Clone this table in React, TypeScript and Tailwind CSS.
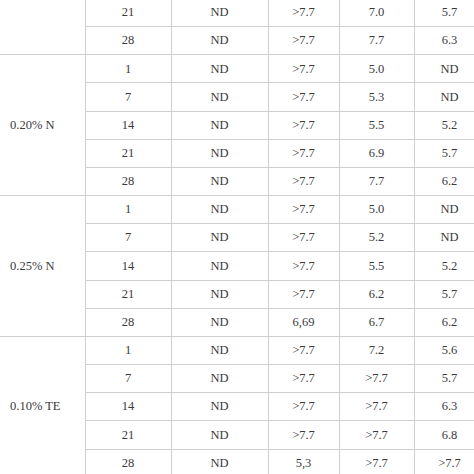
type Row = [string, string, string, string, string];

const groups: { label: string; rows: Row[] }[] = [
  {
    label: "",
    rows: [
      ["21", "ND", ">7.7", "7.0", "5.7"],
      ["28", "ND", ">7.7", "7.7", "6.3"],
    ],
  },
  {
    label: "0.20% N",
    rows: [
      ["1", "ND", ">7.7", "5.0", "ND"],
      ["7", "ND", ">7.7", "5.3", "ND"],
      ["14", "ND", ">7.7", "5.5", "5.2"],
      ["21", "ND", ">7.7", "6.9", "5.7"],
      ["28", "ND", ">7.7", "7.7", "6.2"],
    ],
  },
  {
    label: "0.25% N",
    rows: [
      ["1", "ND", ">7.7", "5.0", "ND"],
      ["7", "ND", ">7.7", "5.2", "ND"],
      ["14", "ND", ">7.7", "5.5", "5.2"],
      ["21", "ND", ">7.7", "6.2", "5.7"],
      ["28", "ND", "6,69", "6.7", "6.2"],
    ],
  },
  {
    label: "0.10% TE",
    rows: [
      ["1", "ND", ">7.7", "7.2", "5.6"],
      ["7", "ND", ">7.7", ">7.7", "5.7"],
      ["14", "ND", ">7.7", ">7.7", "6.3"],
      ["21", "ND", ">7.7", ">7.7", "6.8"],
      ["28", "ND", "5,3", ">7.7", ">7.7"],
    ],
  },
];

export default function App() {
  return (
    <div className="h-[474px] w-[474px] overflow-hidden bg-white">
      <table
        className="-mt-[2px] w-[485px] table-fixed border-collapse text-[12.5px] text-[#3a3a3a]"
        style={{ fontFamily: '"Liberation Serif", "Times New Roman", serif' }}
      >
        <colgroup>
          <col className="w-[85px]" />
          <col className="w-[86px]" />
          <col className="w-[97px]" />
          <col className="w-[71px]" />
          <col className="w-[75px]" />
          <col className="w-[71px]" />
        </colgroup>
        <tbody>
          {groups.map((g, gi) =>
            g.rows.map((r, ri) => (
              <tr key={`${gi}-${ri}`} className="h-[28.17px]">
                {ri === 0 && (
                  <td
                    rowSpan={g.rows.length}
                    className="border-y border-r border-[#cfcfcf] p-0 pl-[10px] text-left align-middle"
                  >
                    {g.label}
                  </td>
                )}
                {r.map((c, ci) => (
                  <td
                    key={ci}
                    className="border border-[#cfcfcf] p-0 text-center align-middle"
                  >
                    {c}
                  </td>
                ))}
              </tr>
            ))
          )}
        </tbody>
      </table>
    </div>
  );
}
